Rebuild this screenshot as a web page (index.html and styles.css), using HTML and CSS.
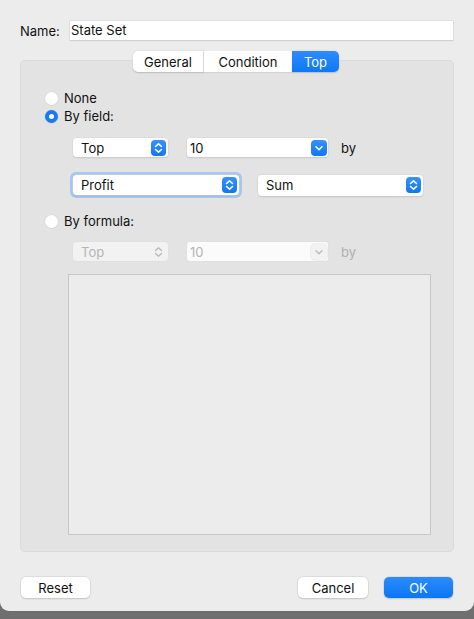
FILE: index.html
```html
<!DOCTYPE html>
<html lang="en">
<head>
    <meta charset="UTF-8">
    <title>Set - Top</title>
    <link rel="stylesheet" href="styles.css">
</head>
<body>

<div class="window">
    <div class="name-row">
        <label class="name-label">Name:</label>
        <div class="text-field">State Set</div>
    </div>

    <div class="tabview">
        <div class="tabs">
            <span class="tab tab-general">General</span>
            <span class="tab tab-condition">Condition</span>
            <span class="tab tab-top active">Top</span>
        </div>

        <div class="panel">
            <div class="radio-row first">
                <span class="radio"></span>None
            </div>
            <div class="radio-row">
                <span class="radio on"></span>By field:
            </div>

            <div class="ctrl-row row-top">
                <div class="popup popup-small">
                    <span>Top</span>
                    <span class="arrow"><svg width="15" height="16" viewBox="0 0 15 16"><path d="M4.5 6.5 L7.5 3.8 L10.5 6.5 M4.5 9.5 L7.5 12.2 L10.5 9.5" fill="none" stroke="#fff" stroke-width="1.6" stroke-linecap="round" stroke-linejoin="round"/></svg></span>
                </div>
                <div class="popup combo">
                    <span>10</span>
                    <span class="arrow"><svg width="16" height="16" viewBox="0 0 16 16"><path d="M5 6.8 L8 9.8 L11 6.8" fill="none" stroke="#fff" stroke-width="1.6" stroke-linecap="round" stroke-linejoin="round"/></svg></span>
                </div>
                <span class="by">by</span>
            </div>

            <div class="ctrl-row row-field">
                <div class="focus-ring">
                    <div class="popup popup-wide">
                        <span>Profit</span>
                        <span class="arrow"><svg width="15" height="16" viewBox="0 0 15 16"><path d="M4.5 6.5 L7.5 3.8 L10.5 6.5 M4.5 9.5 L7.5 12.2 L10.5 9.5" fill="none" stroke="#fff" stroke-width="1.6" stroke-linecap="round" stroke-linejoin="round"/></svg></span>
                    </div>
                </div>
                <div class="popup popup-sum">
                    <span>Sum</span>
                    <span class="arrow"><svg width="15" height="16" viewBox="0 0 15 16"><path d="M4.5 6.5 L7.5 3.8 L10.5 6.5 M4.5 9.5 L7.5 12.2 L10.5 9.5" fill="none" stroke="#fff" stroke-width="1.6" stroke-linecap="round" stroke-linejoin="round"/></svg></span>
                </div>
            </div>

            <div class="radio-row formula">
                <span class="radio"></span>By formula:
            </div>

            <div class="ctrl-row row-disabled disabled">
                <div class="popup popup-small">
                    <span>Top</span>
                    <span class="arrow"><svg width="15" height="16" viewBox="0 0 15 16"><path d="M4.5 6.5 L7.5 3.8 L10.5 6.5 M4.5 9.5 L7.5 12.2 L10.5 9.5" fill="none" stroke="#b9b9b9" stroke-width="1.3" stroke-linecap="round" stroke-linejoin="round"/></svg></span>
                </div>
                <div class="popup combo">
                    <span>10</span>
                    <span class="arrow"><svg width="16" height="16" viewBox="0 0 16 16"><path d="M5 6.8 L8 9.8 L11 6.8" fill="none" stroke="#b9b9b9" stroke-width="1.3" stroke-linecap="round" stroke-linejoin="round"/></svg></span>
                </div>
                <span class="by">by</span>
            </div>

            <div class="formula-box"></div>
        </div>
    </div>

    <div class="buttons">
        <button class="btn btn-reset">Reset</button>
        <span class="spacer"></span>
        <button class="btn btn-cancel">Cancel</button>
        <button class="btn btn-ok">OK</button>
    </div>
</div>

</body>
</html>
```

FILE: styles.css
```css
body {
    margin: 0;
    padding: 0;
    font-family: Inter, "Noto Sans", sans-serif;
    font-size: 13px;
    color: #111;
    background: linear-gradient(#8c8c8c, #6f6f6f);
    height: 619px;
    overflow: hidden;
}
.window {
    width: 474px;
    height: 611px;
    background-color: #ececec;
    border-radius: 0 0 9px 9px;
    box-sizing: border-box;
    padding-top: 21px;
}

/* name */
.name-row {
    display: flex;
    align-items: center;
    height: 19px;
    padding-left: 20px;
}
.name-label {
    width: 50px;
    color: #111;
}
.text-field {
    width: 383px;
    height: 19px;
    line-height: 19px;
    box-sizing: border-box;
    padding-left: 1px;
    background: #fff;
    box-shadow: 0 0 0 0.5px #d2d2d2, 0 1px 1px rgba(0, 0, 0, 0.12);
    color: #111;
}

/* tabs */
.tabview {
    margin: 11px 20px 0;
}
.tabs {
    display: flex;
    justify-content: center;
    position: relative;
    z-index: 1;
    height: 21px;
    padding-right: 2px;
}
.tab {
    display: flex;
    align-items: center;
    justify-content: center;
    height: 21px;
    background: #fff;
    color: #111;
    box-shadow: 0 0.5px 1.5px rgba(0, 0, 0, 0.18);
}
.tab-general {
    width: 70px;
    border-radius: 5px 0 0 5px;
    border-right: 1px solid #e2e2e2;
}
.tab-condition {
    width: 88px;
}
.tab-top {
    width: 47px;
    border-radius: 0 5px 5px 0;
}
.tab.active {
    background: linear-gradient(#2d8cfc, #0f78f5);
    color: #fff;
}

.panel {
    margin-top: -12px;
    height: 492px;
    box-sizing: border-box;
    background-color: #e3e3e3;
    border: 1px solid #dadada;
    border-radius: 5px;
    padding-top: 28px;
}

/* radios */
.radio-row {
    display: flex;
    align-items: center;
    height: 18px;
    padding-left: 24px;
}
.radio {
    width: 13px;
    height: 13px;
    border-radius: 50%;
    background: #fff;
    box-shadow: 0 0 0 0.5px #d6d6d6, 0 0.5px 1px rgba(0, 0, 0, 0.15);
    margin-right: 6px;
    box-sizing: border-box;
}
.radio.on {
    background: #fff;
    border: 4px solid #1779f3;
}
.radio-row.formula {
    margin-top: 14px;
}

/* popups */
.ctrl-row {
    display: flex;
    align-items: center;
    padding-left: 52px;
}
.row-top {
    margin-top: 13px;
}
.row-field {
    margin-top: 15px;
    padding-left: 49px;
}
.row-disabled {
    margin-top: 12px;
}
.popup {
    display: flex;
    align-items: center;
    justify-content: space-between;
    height: 19px;
    box-sizing: border-box;
    padding-left: 8px;
    padding-right: 2px;
    background: #fff;
    border-radius: 4px;
    box-shadow: 0 0 0 0.5px #d6d6d6, 0 1px 1.5px rgba(0, 0, 0, 0.16);
}
.popup .arrow {
    display: flex;
    width: 15px;
    height: 16px;
    border-radius: 4px;
    background: linear-gradient(#3593fd, #1176f3);
}
.popup.combo {
    padding-left: 3px;
    padding-right: 1px;
    border-radius: 3px;
}
.popup.combo .arrow {
    width: 16px;
}
.popup-small {
    width: 95px;
    margin-right: 19px;
}
.combo {
    width: 141px;
}
.popup-wide {
    width: 166px;
    height: 20px;
}
.popup-sum {
    width: 165px;
    height: 21px;
    margin-left: 16px;
}
.focus-ring {
    padding: 3px;
    border-radius: 6px;
    background: #a7c7f0;
}
.by {
    margin-left: 13px;
}

.disabled .popup {
    background: #f2f2f2;
    box-shadow: 0 0 0 0.5px #dedede;
    color: #b5b5b5;
}
.disabled .combo {
    background: #fbfbfb;
}
.disabled .popup .arrow {
    background: none;
}
.disabled .combo .arrow {
    background: #f2f2f2;
    box-shadow: 0 0 0 0.5px #e2e2e2;
}
.disabled .by {
    color: #b0b0b0;
}

.formula-box {
    margin: 13px 0 0 47px;
    width: 363px;
    height: 261px;
    box-sizing: border-box;
    background: #ececec;
    border: 1px solid #c6c6c6;
}

/* buttons */
.buttons {
    display: flex;
    align-items: center;
    margin-top: 25px;
    padding: 0 21px;
}
.spacer {
    flex: 1;
}
.btn {
    font-family: Inter, "Noto Sans", sans-serif;
    font-size: 13px;
    height: 21px;
    padding: 0;
    border: none;
    border-radius: 5px;
    background: #fff;
    color: #111;
    box-shadow: 0 0 0 0.5px #d0d0d0, 0 1px 1.5px rgba(0, 0, 0, 0.2);
}
.btn-reset {
    width: 69px;
}
.btn-cancel {
    width: 70px;
    margin-right: 16px;
}
.btn-ok {
    width: 69px;
    background: linear-gradient(#2b8bfc, #0b76f4);
    color: #fff;
}
```
